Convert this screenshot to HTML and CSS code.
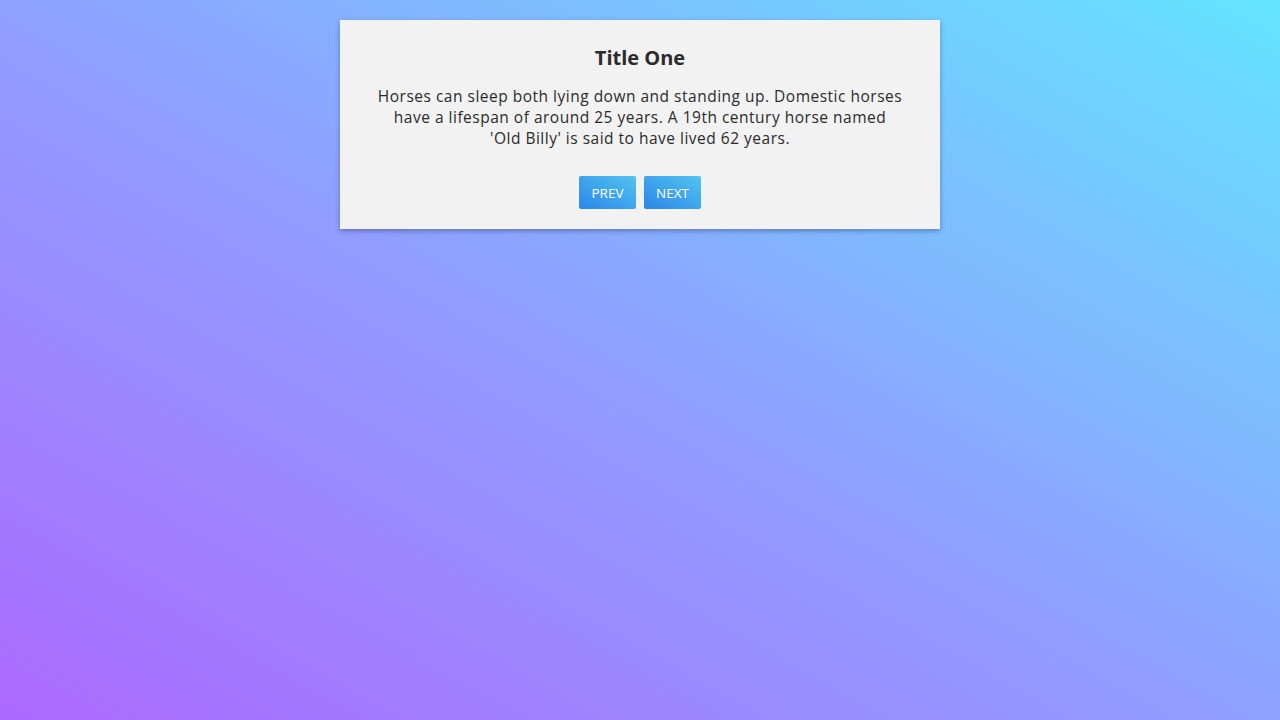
FILE: index.html
```html
<!DOCTYPE html>
<html>
<head>
<meta charset="utf-8">
<link rel="stylesheet" href="styles.css">
</head>
<body>
<div class="card">
  <h1 class="title">Title One</h1>
  <p class="text">Horses can sleep both lying down and standing up. Domestic horses have a lifespan of around 25 years. A 19th century horse named 'Old Billy' is said to have lived 62 years.</p>
  <div class="buttons">
    <button class="btn">PREV</button>
    <button class="btn">NEXT</button>
  </div>
</div>
</body>
</html>
```
FILE: styles.css
```css
html, body {
  margin: 0;
  height: 100%;
}
body {
  background: linear-gradient(to top right, #ab69ff 0%, #8fa0ff 50%, #64e4ff 100%);
  font-family: "Open Sans", "DejaVu Sans", sans-serif;
  color: #2b2b2b;
  padding-top: 20px;
  box-sizing: border-box;
}
.card {
  width: 600px;
  margin: 0 auto;
  background: #f2f2f2;
  box-shadow: 0 2px 5px rgba(0,0,0,0.3);
  padding: 25px 30px 20px;
  box-sizing: border-box;
  text-align: center;
}
.title {
  margin: 0;
  font-size: 20px;
  line-height: 26px;
  font-weight: 700;
}
.text {
  max-width: 526px;
  margin: 15px auto 0;
  font-size: 15.5px;
  line-height: 21px;
  letter-spacing: 0.5px;
}
.buttons {
  margin-top: 27px;
  display: flex;
  justify-content: center;
  gap: 8px;
}
.btn {
  border: none;
  border-radius: 2px;
  height: 33px;
  width: 57px;
  padding: 0;
  color: #fff;
  font-family: inherit;
  font-size: 13.5px;
  background: linear-gradient(to top right, #2b86e8, #52c4f0);
}
```
